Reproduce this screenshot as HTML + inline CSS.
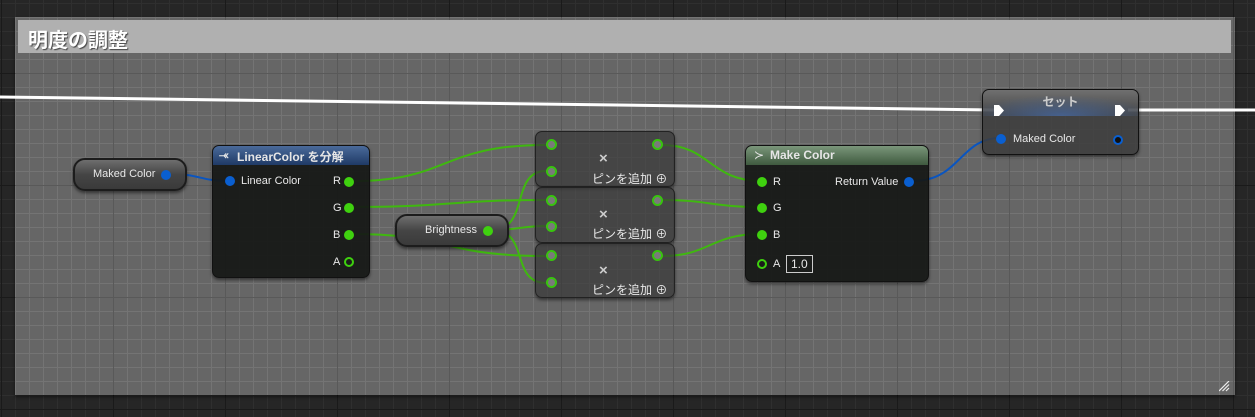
<!DOCTYPE html>
<html><head><meta charset="utf-8"><style>
*{margin:0;padding:0;box-sizing:border-box}
body{width:1255px;height:417px;overflow:hidden;position:relative;font-family:"Liberation Sans","Noto Sans CJK JP",sans-serif;color:#e8e8e8;font-size:11px;
background-color:#262626;
background-image:linear-gradient(90deg,#1a1a1a 1px,transparent 1px),linear-gradient(#1a1a1a 1px,transparent 1px),linear-gradient(90deg,#2f2f2f 1px,transparent 1px),linear-gradient(#2f2f2f 1px,transparent 1px);
background-size:112px 112px,112px 112px,14px 14px,14px 14px;background-position:1px 73px,1px 73px,1px 3px,1px 3px}
.box{position:absolute;left:15px;top:17px;width:1220px;height:378px;background-color:#666;
background-image:linear-gradient(90deg,#595959 1px,transparent 1px),linear-gradient(#595959 1px,transparent 1px),linear-gradient(90deg,#747474 1px,transparent 1px),linear-gradient(#747474 1px,transparent 1px);
background-size:112px 112px,112px 112px,14px 14px,14px 14px;background-position:-14px 56px,-14px 56px,-14px 0px,-14px 0px;box-shadow:0 2px 3px rgba(0,0,0,.5)}
.title{position:absolute;left:18px;top:20px;width:1213px;height:33px;background:#b0b0b0;font-size:20px;font-weight:bold;color:#fff;padding:4px 0 0 10px;text-shadow:1px 1px 1px #444}
.n{position:absolute;border-radius:7px;border:1px solid #111;box-shadow:0 2px 3px rgba(0,0,0,.5)}
.dark{background:rgba(22,24,22,.93)}
.hdr{position:absolute;left:0;right:0;top:0;height:19px;border-radius:6px 6px 0 0;font-weight:bold;font-size:12px;padding:2px 0 0 24px;color:#e6e6e6}
.pill{background:linear-gradient(#6e6e6e,#454545 50%,#3a3a3a);border-radius:12px;border:2px solid #1c1c1c}
.add{background:rgba(55,55,55,.7);border-color:#222}
.t{position:absolute;white-space:nowrap}
.p{position:absolute;width:10px;height:10px;border-radius:50%}
.g{background:#3fd10f}.b{background:#0a5fd0}
.gr{background:#7a7a7a;border:2px solid #38c40e;width:11px;height:11px}
</style></head><body>
<div class="box"></div>
<div class="title">明度の調整</div>
<svg style="position:absolute;left:0;top:0" width="1255" height="417">
<g fill="none" stroke-width="2">
<path d="M0 97 L995 110" stroke="#fff" stroke-width="3"/>
<path d="M1128 110 L1255 110" stroke="#fff" stroke-width="3"/>
<g stroke="#3fb80f">
<path d="M353 181 C450 181 440 145 546 145"/>
<path d="M353 207 C450 207 450 200 546 200"/>
<path d="M353 234 C450 234 440 256 546 256"/>
<path d="M492 230 C530 230 510 171 546 171"/>
<path d="M492 230 C520 230 520 226 546 226"/>
<path d="M492 230 C530 230 510 283 546 283"/>
<path d="M662 145 C710 145 710 181 761 181"/>
<path d="M662 200 C710 200 710 207 761 207"/>
<path d="M662 256 C710 256 710 234 761 234"/>
</g>
<g stroke="#0a55c0">
<path d="M170 174 C200 174 200 181 229 181"/>
<path d="M913 181 C960 181 960 138 1000 138"/>
</g>
</g>
</svg>

<div class="n pill" style="left:73px;top:158px;width:114px;height:33px"><span class="t" style="left:18px;top:8px">Maked Color</span><span class="p b" style="left:86px;top:10px"></span></div>

<div class="n dark" style="left:212px;top:145px;width:158px;height:133px">
<div class="hdr" style="background:linear-gradient(#4a6a9a,#1f3a66)">LinearColor を分解</div>
<span class="t" style="left:6px;top:2px;font-weight:bold;font-size:12px">⤛</span>
<span class="p b" style="left:12px;top:30px"></span><span class="t" style="left:28px;top:29px">Linear Color</span>
<span class="t" style="left:120px;top:29px">R</span><span class="p g" style="left:131px;top:31px"></span>
<span class="t" style="left:120px;top:56px">G</span><span class="p g" style="left:131px;top:57px"></span>
<span class="t" style="left:120px;top:83px">B</span><span class="p g" style="left:131px;top:84px"></span>
<span class="t" style="left:120px;top:110px">A</span><span class="p" style="left:131px;top:111px;border:2px solid #3fd10f"></span>
</div>

<div class="n pill" style="left:395px;top:214px;width:114px;height:33px"><span class="t" style="left:28px;top:8px">Brightness</span><span class="p g" style="left:86px;top:10px"></span></div>

<div class="n add" style="left:535px;top:131px;width:140px;height:56px"><span class="p gr" style="left:10px;top:7px"></span><span class="p gr" style="left:10px;top:34px"></span><span class="p gr" style="left:116px;top:7px"></span><span class="t" style="left:63px;top:18px;font-size:15px;color:#ccc;font-weight:bold">×</span><span class="t" style="left:56px;top:38px;font-size:12px">ピンを追加 ⊕</span></div>
<div class="n add" style="left:535px;top:187px;width:140px;height:56px"><span class="p gr" style="left:10px;top:7px"></span><span class="p gr" style="left:10px;top:33px"></span><span class="p gr" style="left:116px;top:7px"></span><span class="t" style="left:63px;top:18px;font-size:15px;color:#ccc;font-weight:bold">×</span><span class="t" style="left:56px;top:37px;font-size:12px">ピンを追加 ⊕</span></div>
<div class="n add" style="left:535px;top:243px;width:140px;height:55px"><span class="p gr" style="left:10px;top:6px"></span><span class="p gr" style="left:10px;top:33px"></span><span class="p gr" style="left:116px;top:6px"></span><span class="t" style="left:63px;top:18px;font-size:15px;color:#ccc;font-weight:bold">×</span><span class="t" style="left:56px;top:37px;font-size:12px">ピンを追加 ⊕</span></div>

<div class="n dark" style="left:745px;top:145px;width:184px;height:137px">
<div class="hdr" style="background:linear-gradient(#7a967a,#3f5a3f)">Make Color</div>
<span class="t" style="left:8px;top:2px;font-size:12px">≻</span>
<span class="p g" style="left:11px;top:31px"></span><span class="t" style="left:27px;top:30px">R</span>
<span class="p g" style="left:11px;top:57px"></span><span class="t" style="left:27px;top:56px">G</span>
<span class="p g" style="left:11px;top:84px"></span><span class="t" style="left:27px;top:83px">B</span>
<span class="p" style="left:11px;top:113px;border:2px solid #3fd10f"></span><span class="t" style="left:27px;top:112px">A</span>
<span class="t" style="left:40px;top:109px;border:1px solid #ccc;padding:1px 4px;font-size:12px">1.0</span>
<span class="t" style="left:89px;top:30px">Return Value</span><span class="p b" style="left:158px;top:31px"></span>
</div>

<div class="n" style="left:982px;top:89px;width:157px;height:66px;background:rgba(60,60,60,.85)">
<div class="hdr" style="height:26px;background:radial-gradient(ellipse 60% 80% at 50% 100%,rgba(70,100,150,.9),rgba(60,60,60,0)),linear-gradient(#707070,rgba(60,60,60,0));text-align:center;padding:3px 0 0 0;color:#ccc">セット</div>
<svg style="position:absolute;left:10px;top:14px" width="12" height="13"><path d="M1 1 H6 L11 6.5 L6 12 H1 Z" fill="#fff"/></svg>
<svg style="position:absolute;left:131px;top:14px" width="12" height="13"><path d="M1 1 H6 L11 6.5 L6 12 H1 Z" fill="#fff"/></svg>
<span class="p b" style="left:13px;top:44px"></span><span class="t" style="left:30px;top:43px">Maked Color</span>
<span class="p" style="left:130px;top:45px;border:2px solid #0a5fd0;background:#111"></span>
</div>
<svg style="position:absolute;left:1219px;top:381px" width="11" height="11"><path d="M10 0 L0 10 M10 3.5 L3.5 10 M10 7 L7 10" stroke="#eee" stroke-width="1.2"/></svg>
</body></html>
